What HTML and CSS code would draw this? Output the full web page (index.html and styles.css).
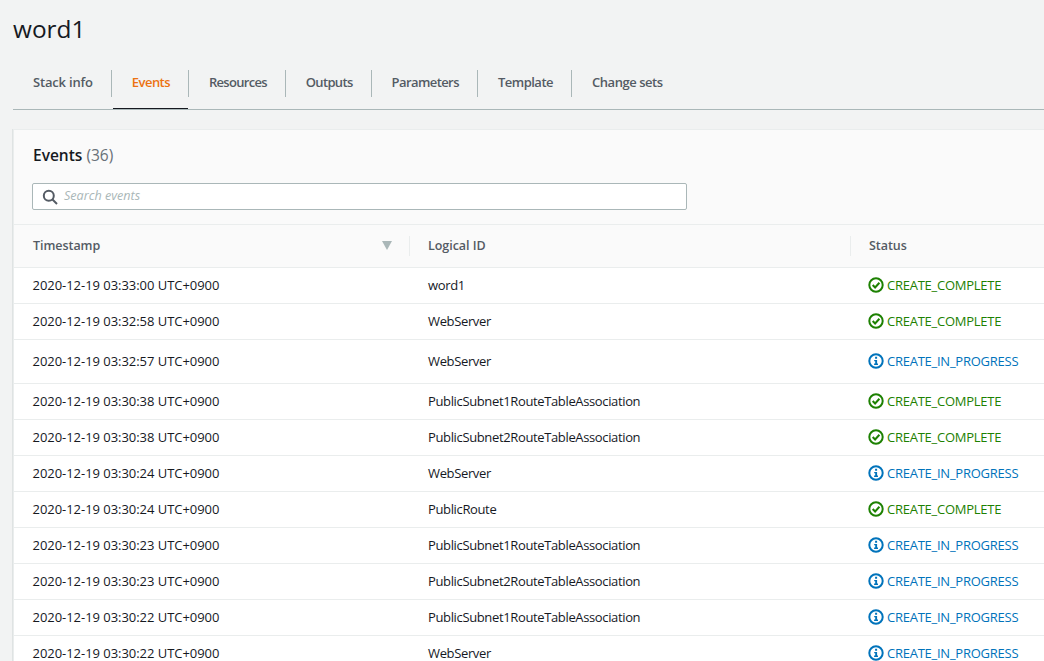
FILE: index.html
```html
<!DOCTYPE html>
<html lang="en">
<head>
<meta charset="utf-8">
<title>word1</title>
<link rel="stylesheet" href="styles.css">
</head>
<body>
<svg class="defs" width="0" height="0" aria-hidden="true">
  <symbol id="ok" viewBox="0 0 16 16">
    <circle cx="8" cy="8" r="6.7" fill="none" stroke="currentColor" stroke-width="2"/>
    <path d="M4.7 8l2.4 2.5 4.3-4.7" fill="none" stroke="currentColor" stroke-width="2"/>
  </symbol>
  <symbol id="info" viewBox="0 0 16 16">
    <circle cx="8" cy="8" r="6.7" fill="none" stroke="currentColor" stroke-width="2"/>
    <path d="M6.2 7h2.9v3.6h.9V12H6.1v-1.4h1.1V8.3h-1zM7.1 3.8h2v1.9h-2z" fill="currentColor"/>
  </symbol>
</svg>
<main class="page">
  <h1 class="title">word1</h1>
  <nav class="tabs">
    <a class="tab t-info">Stack info</a>
    <a class="tab t-events active">Events</a>
    <a class="tab t-res">Resources</a>
    <a class="tab t-out">Outputs</a>
    <a class="tab t-par">Parameters</a>
    <a class="tab t-tpl">Template</a>
    <a class="tab t-chg">Change sets</a>
  </nav>
  <section class="card">
    <header class="card-head">
      <h2 class="card-title">Events <span class="count">(36)</span></h2>
      <div class="search">
        <svg class="search-icon" viewBox="0 0 16 16" width="16" height="16" aria-hidden="true">
          <circle cx="6.8" cy="6.8" r="5" fill="none" stroke="currentColor" stroke-width="2"/>
          <path d="M10.5 10.5l4.5 4.5" fill="none" stroke="currentColor" stroke-width="2"/>
        </svg>
        <span class="placeholder">Search events</span>
      </div>
    </header>
    <table class="events">
      <colgroup><col class="c1"><col class="c2"><col class="c3"></colgroup>
      <thead>
        <tr>
          <th><div class="th-in">Timestamp<span class="sort"></span></div></th>
          <th><div class="th-in">Logical ID</div></th>
          <th><div class="th-in">Status</div></th>
        </tr>
      </thead>
      <tbody>
        <tr><td class="ts">2020-12-19 03:33:00 UTC+0900</td><td class="id">word1</td><td class="st ok"><svg class="ic"><use href="#ok"/></svg>CREATE_COMPLETE</td></tr>
        <tr><td class="ts">2020-12-19 03:32:58 UTC+0900</td><td class="id">WebServer</td><td class="st ok"><svg class="ic"><use href="#ok"/></svg>CREATE_COMPLETE</td></tr>
        <tr class="tall"><td class="ts">2020-12-19 03:32:57 UTC+0900</td><td class="id">WebServer</td><td class="st prog"><svg class="ic"><use href="#info"/></svg>CREATE_IN_PROGRESS</td></tr>
        <tr><td class="ts">2020-12-19 03:30:38 UTC+0900</td><td class="id">PublicSubnet1RouteTableAssociation</td><td class="st ok"><svg class="ic"><use href="#ok"/></svg>CREATE_COMPLETE</td></tr>
        <tr><td class="ts">2020-12-19 03:30:38 UTC+0900</td><td class="id">PublicSubnet2RouteTableAssociation</td><td class="st ok"><svg class="ic"><use href="#ok"/></svg>CREATE_COMPLETE</td></tr>
        <tr><td class="ts">2020-12-19 03:30:24 UTC+0900</td><td class="id">WebServer</td><td class="st prog"><svg class="ic"><use href="#info"/></svg>CREATE_IN_PROGRESS</td></tr>
        <tr><td class="ts">2020-12-19 03:30:24 UTC+0900</td><td class="id">PublicRoute</td><td class="st ok"><svg class="ic"><use href="#ok"/></svg>CREATE_COMPLETE</td></tr>
        <tr><td class="ts">2020-12-19 03:30:23 UTC+0900</td><td class="id">PublicSubnet1RouteTableAssociation</td><td class="st prog"><svg class="ic"><use href="#info"/></svg>CREATE_IN_PROGRESS</td></tr>
        <tr><td class="ts">2020-12-19 03:30:23 UTC+0900</td><td class="id">PublicSubnet2RouteTableAssociation</td><td class="st prog"><svg class="ic"><use href="#info"/></svg>CREATE_IN_PROGRESS</td></tr>
        <tr><td class="ts">2020-12-19 03:30:22 UTC+0900</td><td class="id">PublicSubnet1RouteTableAssociation</td><td class="st prog"><svg class="ic"><use href="#info"/></svg>CREATE_IN_PROGRESS</td></tr>
        <tr><td class="ts">2020-12-19 03:30:22 UTC+0900</td><td class="id">WebServer</td><td class="st prog"><svg class="ic"><use href="#info"/></svg>CREATE_IN_PROGRESS</td></tr>
      </tbody>
    </table>
  </section>
</main>
</body>
</html>
```
FILE: styles.css
```css
* { box-sizing: border-box; }
html, body { margin: 0; height: 100%; overflow: hidden; }
body {
  background: #f2f3f3;
  color: #16191f;
  font-family: "Open Sans", "Noto Sans", sans-serif;
  font-size: 13px;
}
.defs { position: absolute; }
.page { padding-left: 13px; }
.title {
  margin: 0;
  padding-top: 11px;
  height: 70px;
  font-size: 24.4px;
  line-height: 36px;
  font-weight: 400;
}
.tabs {
  display: flex;
  height: 40px;
  border-bottom: 1px solid #aab7b8;
  margin-bottom: 19px;
}
.tab {
  position: relative;
  height: 27px;
  line-height: 25px;
  padding: 0 18px 0 20px;
  border-right: 1px solid #aab7b8;
  font-weight: 600;
  color: #545b64;
}
.t-info { letter-spacing: -0.18px; }
.t-events { letter-spacing: -0.55px; }
.t-res { letter-spacing: -0.71px; }
.t-out { letter-spacing: -0.67px; }
.t-par { letter-spacing: -0.58px; }
.t-tpl { letter-spacing: -0.5px; }
.t-chg { letter-spacing: -0.47px; }
.tab:last-child { border-right: 0; }
.tab.active { color: #ec7211; }
.tab.active::after {
  content: "";
  position: absolute;
  left: 1px;
  right: 0;
  top: 38px;
  height: 1px;
  background: #16191f;
}
.card {
  background: #fff;
  border: 1px solid #eaeded;
  border-right: 0;
  border-bottom: 0;
  box-shadow: -1px 0 0 #dfe3e3;
}
.card-head {
  background: #fafafa;
  height: 95px;
  padding: 14px 0 0 18px;
  border-bottom: 1px solid #eaeded;
}
.card-title {
  margin: 0 0 17px;
  padding-left: 1px;
  font-size: 15.5px;
  line-height: 22px;
  font-weight: 600;
}
.count { font-weight: 400; color: #687078; }
.search {
  display: flex;
  align-items: center;
  width: 655px;
  height: 27px;
  background: #fff;
  border: 1px solid #aab7b8;
  border-radius: 2px;
  padding-left: 9px;
}
.search-icon { color: #545b64; flex: none; }
.placeholder {
  margin-left: 6px;
  padding-bottom: 2px;
  font-size: 12.6px;
  font-style: italic;
  color: #aab7b8;
}
.events {
  width: 100%;
  border-collapse: collapse;
  table-layout: fixed;
}
.c1 { width: 396px; }
.c2 { width: 441px; }
th {
  background: #fafafa;
  height: 42px;
  padding: 0;
  text-align: left;
  font-weight: 600;
  font-size: 12.5px;
  letter-spacing: -0.05px;
  color: #545b64;
  border-bottom: 1px solid #eaeded;
}
.th-in {
  position: relative;
  display: flex;
  align-items: center;
  height: 20px;
  padding-left: 18px;
  border-right: 1px solid #eaeded;
}
th:first-child .th-in { padding-left: 19px; }
th:last-child .th-in { border-right: 0; }
.sort {
  position: absolute;
  right: 17px;
  top: 5px;
  border-left: 5.5px solid transparent;
  border-right: 5.5px solid transparent;
  border-top: 9px solid #aab7b8;
}
td {
  height: 36px;
  padding: 0 0 0 18px;
  white-space: nowrap;
  border-bottom: 1px solid #eaeded;
}
.tall td { height: 44px; }
td.ts { padding-left: 18.5px; letter-spacing: -0.04px; }
td.id { letter-spacing: -0.36px; }
td.st { padding-left: 17px; letter-spacing: -0.25px; }
.ic { width: 16px; height: 16px; vertical-align: -3px; margin-right: 3px; }
.ok { color: #1d8102; }
.prog { color: #0073bb; }
```
